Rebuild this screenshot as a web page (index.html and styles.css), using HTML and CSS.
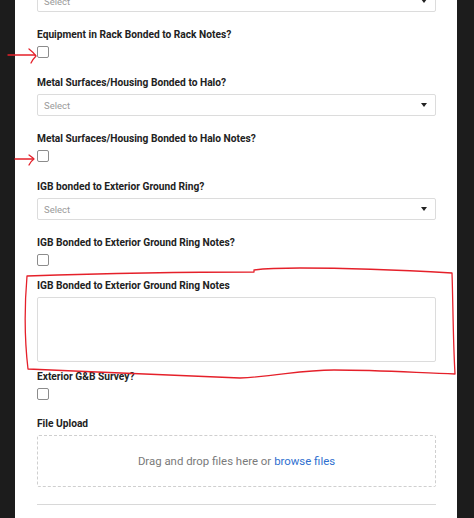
FILE: index.html
```html
<!DOCTYPE html>
<html>
<head>
<meta charset="utf-8">
<link rel="stylesheet" href="styles.css">
</head>
<body>
<div class="page">
  <div class="panel">
    <div class="field field-top">
      <div class="select"><span>Select</span><span class="caret"></span></div>
    </div>
    <div class="field field-check">
      <label class="label">Equipment in Rack Bonded to Rack Notes?</label>
      <input type="checkbox" class="check">
    </div>
    <div class="field">
      <label class="label">Metal Surfaces/Housing Bonded to Halo?</label>
      <div class="select"><span>Select</span><span class="caret"></span></div>
    </div>
    <div class="field field-check">
      <label class="label">Metal Surfaces/Housing Bonded to Halo Notes?</label>
      <input type="checkbox" class="check">
    </div>
    <div class="field">
      <label class="label">IGB bonded to Exterior Ground Ring?</label>
      <div class="select"><span>Select</span><span class="caret"></span></div>
    </div>
    <div class="field field-check-tight">
      <label class="label">IGB Bonded to Exterior Ground Ring Notes?</label>
      <input type="checkbox" class="check">
    </div>
    <div class="field field-notes">
      <label class="label">IGB Bonded to Exterior Ground Ring Notes</label>
      <textarea class="notes"></textarea>
    </div>
    <div class="field field-check-wide">
      <label class="label">Exterior G&amp;B Survey?</label>
      <input type="checkbox" class="check">
    </div>
    <div class="field field-upload">
      <label class="label">File Upload</label>
      <div class="dropzone">Drag and drop files here or <a class="browse">browse files</a></div>
    </div>
    <div class="divider"></div>
  </div>
  <svg class="annot" width="474" height="518" viewBox="0 0 474 518">
    <g fill="none" stroke="#e5202a" stroke-width="1.3" stroke-linecap="round" stroke-linejoin="round">
      <path d="M8 55 L35 55"/>
      <path d="M29 49 Q33 52 36 56 Q33 59 31 63"/>
      <path d="M15 159 L33 159"/>
      <path d="M29 155 Q32 157 34 159 Q31 161 29 165"/>
      <path d="M27 276 C 25 300, 24 335, 28 369 C 100 372, 180 376, 240 378 C 280 376, 300 370, 334 370 C 380 370, 420 373, 455 374 C 453 340, 453 300, 452 273 C 400 270, 350 268, 300 268 C 280 268, 262 269, 254 270 L 254 272 C 234 272, 150 272, 27 276 Z"/>
    </g>
  </svg>
</div>
</body>
</html>
```

FILE: styles.css
```css
html, body {
  margin: 0;
  padding: 0;
  background: #1c1c1c;
}

.page {
  position: relative;
  width: 474px;
  height: 518px;
  overflow: hidden;
  font-family: Roboto, "Liberation Sans", sans-serif;
}

.panel {
  margin-left: 15px;
  width: 442px;
  height: 518px;
  box-sizing: border-box;
  padding: 0 21px 0 22px;
  background: #ffffff;
  overflow: hidden;
}

.field {
  display: flex;
  flex-direction: column;
  align-items: flex-start;
  margin-bottom: 16px;
}

.field-top {
  margin-top: -10px;
}

.field-check {
  margin-bottom: 18px;
}

.field-check-tight {
  margin-bottom: 13px;
}

.field-notes {
  margin-bottom: 8px;
}

.field-check-wide {
  margin-bottom: 17px;
}

.field-upload {
  margin-bottom: 17px;
}

.label {
  display: block;
  height: 14px;
  line-height: 14px;
  font-size: 10.2px;
  font-weight: 700;
  color: #222222;
  margin-bottom: 4px;
}

.select {
  width: 399px;
  height: 22px;
  box-sizing: border-box;
  border: 1px solid #dcdcdc;
  border-radius: 2px;
  display: flex;
  align-items: center;
  justify-content: space-between;
  padding: 0 8px 0 6px;
  font-size: 9.5px;
  color: #9a9a9a;
  background: #fff;
}

.caret {
  width: 0;
  height: 0;
  border-left: 3px solid transparent;
  border-right: 3px solid transparent;
  border-top: 4px solid #222;
}

.check {
  appearance: none;
  -webkit-appearance: none;
  margin: 0;
  width: 12px;
  height: 12px;
  box-sizing: border-box;
  border: 1px solid #8c8c8c;
  border-radius: 2px;
  background: #fff;
}

.notes {
  width: 399px;
  height: 65px;
  box-sizing: border-box;
  border: 1px solid #dcdcdc;
  border-radius: 2px;
  resize: none;
  margin: 0;
  padding: 0;
  outline: none;
}

.dropzone {
  width: 399px;
  height: 52px;
  box-sizing: border-box;
  border: 1px dashed #cfcfcf;
  border-radius: 2px;
  display: flex;
  align-items: center;
  justify-content: center;
  font-size: 11.4px;
  color: #7a7a7a;
}

.browse {
  color: #2f6fcf;
  margin-left: 3px;
}

.divider {
  width: 399px;
  height: 1px;
  background: #d8d8d8;
}

.annot {
  position: absolute;
  top: 0;
  left: 0;
  pointer-events: none;
}
```
